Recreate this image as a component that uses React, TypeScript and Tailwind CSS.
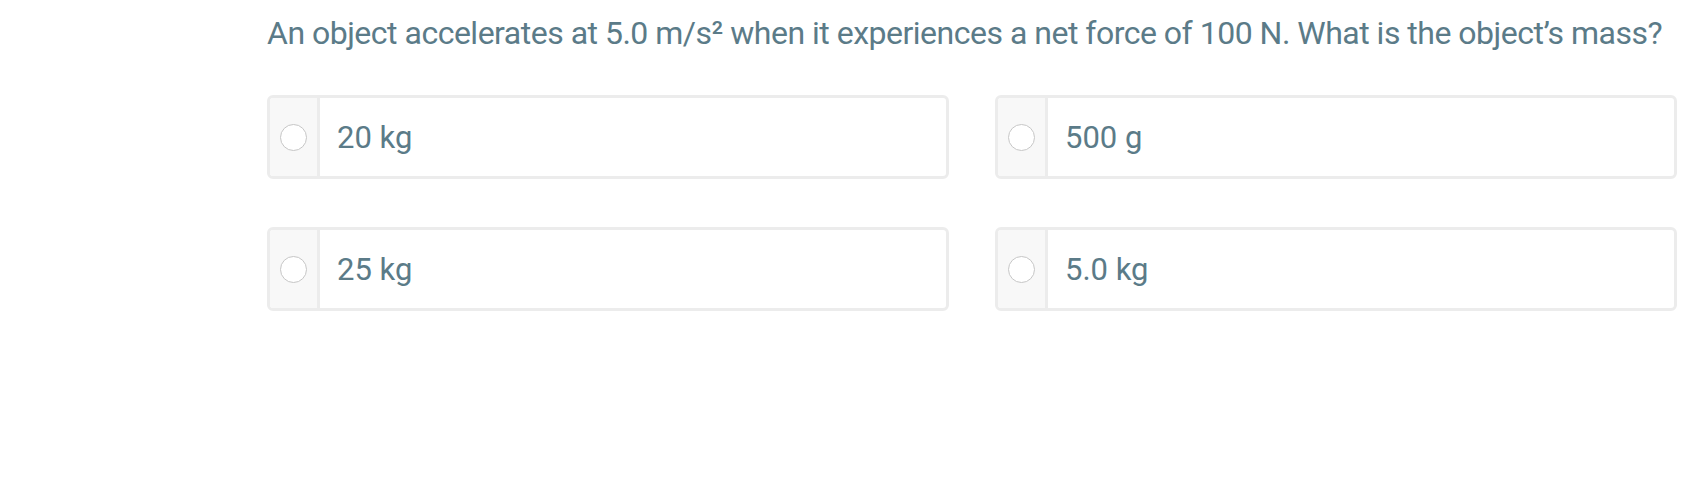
import React from "react";

const options = ["20 kg", "500 g", "25 kg", "5.0 kg"];

function Option({ label }: { label: string }) {
  return (
    <label className="flex h-[84px] cursor-pointer overflow-hidden rounded-[6px] border-[3px] border-[#ececec] bg-white">
      <div className="flex w-[50px] shrink-0 items-center justify-center border-r-[3px] border-[#ececec] bg-[#f8f8f8]">
        <span className="block h-[27px] w-[27px] rounded-full border border-[#c6c6c6] bg-white" />
      </div>
      <div className="flex items-center pl-[17px] text-[31px] leading-none text-[#5b7b88]">{label}</div>
    </label>
  );
}

export default function App() {
  return (
    <div
      className="min-h-[497px] w-[1686px] bg-white pl-[267px] pr-[9px]"
      style={{ fontFamily: "Roboto, 'Noto Sans', sans-serif" }}
    >
      <p className="whitespace-nowrap pt-[13px] text-[32px] leading-[40px] tracking-[-0.5px] text-[#5b7b88]">
        An object accelerates at 5.0 m/s² when it experiences a net force of 100 N. What is the object’s mass?
      </p>
      <div className="mt-[42px] grid grid-cols-2 gap-x-[46px] gap-y-[48px]">
        {options.map((o) => (
          <Option key={o} label={o} />
        ))}
      </div>
    </div>
  );
}
